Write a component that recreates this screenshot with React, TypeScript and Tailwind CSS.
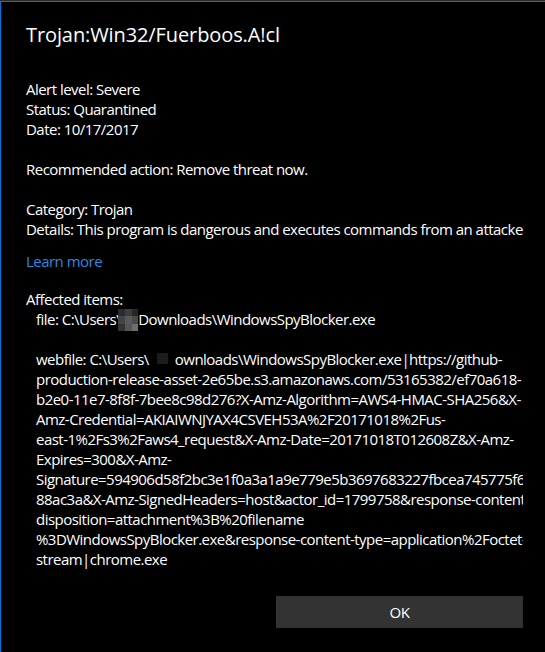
const webLines = [
  "production-release-asset-2e65be.s3.amazonaws.com/53165382/ef70a618-",
  "b2e0-11e7-8f8f-7bee8c98d276?X-Amz-Algorithm=AWS4-HMAC-SHA256&X-",
  "Amz-Credential=AKIAIWNJYAX4CSVEH53A%2F20171018%2Fus-",
  "east-1%2Fs3%2Faws4_request&X-Amz-Date=20171018T012608Z&X-Amz-",
  "Expires=300&X-Amz-",
  "Signature=594906d58f2bc3e1f0a3a1a9e779e5b3697683227fbcea745775f6",
  "88ac3a&X-Amz-SignedHeaders=host&actor_id=1799758&response-content-",
  "disposition=attachment%3B%20filename",
  "%3DWindowsSpyBlocker.exe&response-content-type=application%2Foctet-",
  "stream|chrome.exe",
];

function Line({ children, className = "" }: { children: React.ReactNode; className?: string }) {
  return <div className={`h-5 leading-5 whitespace-nowrap overflow-hidden ${className}`}>{children}</div>;
}

// pixelated name blur from the screenshot
function Blur() {
  return (
    <span className="inline-grid grid-cols-3 w-[20px] h-[22px] align-text-top -ml-[3px]">
      <span className="bg-[#2c2c2c]" />
      <span className="bg-[#3d3d3d]" />
      <span className="bg-[#262626]" />
      <span className="bg-[#444444]" />
      <span className="bg-[#5a5a5a]" />
      <span className="bg-[#4a4a4a]" />
      <span className="bg-[#333333]" />
      <span className="bg-[#555555]" />
      <span className="bg-[#6e6e6e]" />
    </span>
  );
}

export default function App() {
  return (
    <div className="w-[545px] h-[652px] bg-black overflow-hidden text-white font-['Open_Sans','Noto_Sans',sans-serif]">
      <div className="h-px bg-[#2a2a2a]" />
      <div className="h-[651px] border-t border-l border-[#0078d7] flex flex-col pl-[25px] pr-[22px] pt-[19px] text-[15px] tracking-[-0.035em]">
        <div className="text-[20px] leading-[27px] tracking-[-0.005em]">Trojan:Win32/Fuerboos.A!cl</div>

        <div className="mt-[31px]">
          <Line>Alert level: Severe</Line>
          <Line>Status: Quarantined</Line>
          <Line>Date: 10/17/2017</Line>
          <div className="h-5" />
          <Line>Recommended action: Remove threat now.</Line>
          <div className="h-5" />
          <Line>Category: Trojan</Line>
          <Line>Details: This program is dangerous and executes commands from an attacker.</Line>
        </div>

        <div className="mt-3 h-5 leading-5 text-[#2a8ae0]">Learn more</div>

        <div className="mt-[18px]">
          <Line>Affected items:</Line>
          <Line className="pl-[10px] overflow-visible">
            file: C:\Users\<Blur />Downloads\WindowsSpyBlocker.exe
          </Line>
          <div className="h-5" />
          <div className="pl-[10px]">
            <Line>
              webfile: C:\Users\
              <span className="inline-flex w-[26px] h-[20px] align-top pl-[8px] pt-[4px]">
                <span className="w-[11px] h-[11px] bg-[#1c1c1c]" />
              </span>
              ownloads\WindowsSpyBlocker.exe|https://github-
            </Line>
            {webLines.map((l, i) => (
              <Line key={i}>{l}</Line>
            ))}
          </div>
        </div>

        <button className="mt-[27px] self-end w-[247px] h-8 bg-[#333333] text-white text-[15px] leading-8">
          OK
        </button>
      </div>
    </div>
  );
}
